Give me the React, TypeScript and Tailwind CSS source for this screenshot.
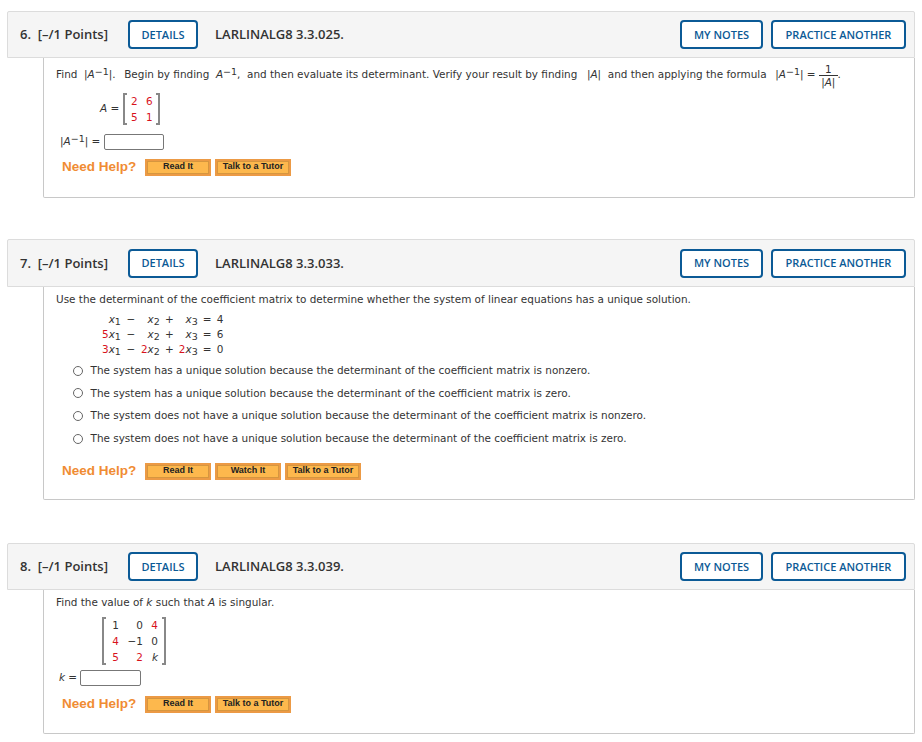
import type { ReactNode } from "react";

const bodyFont = "font-['DejaVu_Sans',sans-serif] text-[10.45px] text-[#333]";

function OutlineButton({ label, className }: { label: string; className: string }) {
  return (
    <div
      className={`flex h-[29px] items-center justify-center rounded-[4px] border-2 border-[#0b5a96] bg-white pt-[1px] font-['Open_Sans',sans-serif] text-[11px] font-semibold text-[#0b5a96] ${className}`}
    >
      {label}
    </div>
  );
}

function Header({ num, code, height }: { num: number; code: string; height: string }) {
  return (
    <div
      className={`flex items-center rounded-t-[2px] border border-[#dcdcdc] bg-[#f5f5f5] pl-[12px] pr-[8px] font-['Open_Sans',sans-serif] text-[#333] ${height}`}
    >
      <span className="w-[108px] whitespace-nowrap pt-[1px] text-[13px] font-semibold">
        {num}.&nbsp; [–/1 Points]
      </span>
      <OutlineButton label="DETAILS" className="w-[70px]" />
      <span className="ml-[17px] pt-[1px] text-[13px] font-semibold">{code}</span>
      <div className="ml-auto flex gap-[8px]">
        <OutlineButton label="MY NOTES" className="w-[83px]" />
        <OutlineButton label="PRACTICE ANOTHER" className="w-[135px]" />
      </div>
    </div>
  );
}

function HelpButton({ label, className }: { label: string; className: string }) {
  return (
    <div
      className={`flex h-[17px] items-center justify-center border-2 border-[#ec9a45] bg-[#fdb84d] font-['Liberation_Sans',sans-serif] text-[9px] font-bold text-[#222] shadow-[inset_0_0_0_1px_#d6963f] ${className}`}
    >
      {label}
    </div>
  );
}

function NeedHelp({ watch, className }: { watch?: boolean; className: string }) {
  return (
    <div className={`flex items-center ${className}`}>
      <span className="w-[83px] font-['Liberation_Sans',sans-serif] text-[13.5px] font-bold text-[#f08c33]">
        Need Help?
      </span>
      <div className="flex gap-[4px]">
        <HelpButton label="Read It" className="w-[66px]" />
        {watch && <HelpButton label="Watch It" className="w-[66px]" />}
        <HelpButton label="Talk to a Tutor" className="w-[76px]" />
      </div>
    </div>
  );
}

function Inv() {
  return (
    <span className="whitespace-nowrap">
      <i>A</i>
      <sup className="top-[-3px] align-baseline text-[9.5px] leading-none">−1</sup>
    </span>
  );
}

const Red = ({ children }: { children: ReactNode }) => <span className="text-[#d8121c]">{children}</span>;

function Matrix({ rows, cols }: { rows: ReactNode[][]; cols: string }) {
  return (
    <div className="relative px-[5px]">
      <div className="absolute inset-y-0 left-0 w-[4px] border-y-2 border-l-2 border-[#888]" />
      <div className="absolute inset-y-0 right-0 w-[4px] border-y-2 border-r-2 border-[#888]" />
      <div className={`grid justify-items-end leading-[16px] ${cols}`}>
        {rows.flat().map((cell, i) => (
          <span key={i}>{cell}</span>
        ))}
      </div>
    </div>
  );
}

const X = ({ n }: { n: number }) => (
  <span className="whitespace-nowrap">
    <i>x</i>
    <sub className="bottom-[-2px] align-baseline text-[9.5px] leading-none">{n}</sub>
  </span>
);

function AnswerBox({ className }: { className: string }) {
  return <div className={`h-[16px] rounded-[2px] border border-[#777] bg-white ${className}`} />;
}

const options = [
  "The system has a unique solution because the determinant of the coefficient matrix is nonzero.",
  "The system has a unique solution because the determinant of the coefficient matrix is zero.",
  "The system does not have a unique solution because the determinant of the coefficient matrix is nonzero.",
  "The system does not have a unique solution because the determinant of the coefficient matrix is zero.",
];

const system: ReactNode[][] = [
  ["", <X n={1} />, "−", "", <X n={2} />, "+", "", <X n={3} />, "=", "4"],
  [<Red>5</Red>, <X n={1} />, "−", "", <X n={2} />, "+", "", <X n={3} />, "=", "6"],
  [<Red>3</Red>, <X n={1} />, "−", <Red>2</Red>, <X n={2} />, "+", <Red>2</Red>, <X n={3} />, "=", "0"],
];

export default function App() {
  return (
    <div className={`min-h-[742px] w-[922px] overflow-hidden bg-white pl-[7px] pt-[11px] ${bodyFont}`}>
      {/* Question 6 */}
      <section className="w-[908px]">
        <Header num={6} code="LARLINALG8 3.3.025." height="h-[47px]" />
        <div className="ml-[36px] h-[140px] rounded-b-[2px] border-x border-b border-[#c8c8c8] pl-[12px] pt-[6px]">
          <p className="flex h-[20px] items-center whitespace-pre leading-[20px]">
            Find  |<Inv />|.  <span className="ml-[2px]">Begin by finding  </span><Inv />,  and then evaluate its determinant. Verify your result by finding  <span className="ml-[3px]">|<i>A</i>|</span>  and then applying the formula  <span className="ml-[2px]">|<Inv />|</span> ={" "}
            <span className="inline-flex translate-y-[2px] flex-col items-center leading-[11px]">
              <span className="border-b border-[#333] px-[6px]">1</span>
              <span className="pt-[1px]">
                |<i>A</i>|
              </span>
            </span>
            .
          </p>
          <div className="mt-[9px] flex items-center pl-[44px]">
            <i>A</i>&nbsp;=&nbsp;
            <Matrix
              cols="grid-cols-[10px_15px] pr-[2px]"
              rows={[
                [<Red>2</Red>, <Red>6</Red>],
                [<Red>5</Red>, <Red>1</Red>],
              ]}
            />
          </div>
          <div className="mt-[9px] flex items-center pl-[4px]">
            <span className="whitespace-pre">
              |<Inv />| =
            </span>
            <AnswerBox className="ml-[4px] w-[60px]" />
          </div>
          <NeedHelp className="mt-[7px] pl-[6px]" />
        </div>
      </section>

      {/* Question 7 */}
      <section className="mt-[41px] w-[908px]">
        <Header num={7} code="LARLINALG8 3.3.033." height="h-[48px]" />
        <div className="ml-[36px] h-[213px] rounded-b-[2px] border-x border-b border-[#c8c8c8] pl-[12px] pt-[3px]">
          <p className="leading-[18px]">
            Use the determinant of the coefficient matrix to determine whether the system of linear equations has a unique solution.
          </p>
          <div className="ml-[46px] mt-[4px] grid grid-cols-[auto_auto_20px_auto_auto_19px_auto_auto_19px_auto] justify-start leading-[15px]">
            {system.flat().map((cell, i) => (
              <span key={i} className={i % 10 === 2 || i % 10 === 5 || i % 10 === 8 ? "text-center" : "text-right"}>
                {cell}
              </span>
            ))}
          </div>
          <div className="ml-[17px] mt-[2.5px] flex flex-col">
            {options.map((text) => (
              <label key={text} className="flex h-[22.6px] items-center">
                <span className="mr-[7.5px] size-[10px] rounded-full border border-[#666] bg-white" />
                {text}
              </label>
            ))}
          </div>
          <NeedHelp watch className="mt-[11px] pl-[6px]" />
        </div>
      </section>

      {/* Question 8 */}
      <section className="mt-[43px] w-[908px]">
        <Header num={8} code="LARLINALG8 3.3.039." height="h-[47px]" />
        <div className="ml-[36px] h-[144px] rounded-b-[2px] border-x border-b border-[#c8c8c8] pl-[12px] pt-[3px]">
          <p className="leading-[18px]">
            Find the value of <i>k</i> such that <i>A</i> is singular.
          </p>
          <div className="ml-[46px] mt-[6px] flex">
            <Matrix
              cols="grid-cols-[12px_24px_15px] pr-[3px]"
              rows={[
                ["1", "0", <Red>4</Red>],
                [<Red>4</Red>, "−1", "0"],
                [<Red>5</Red>, <Red>2</Red>, <i>k</i>],
              ]}
            />
          </div>
          <div className="mt-[5px] flex items-center pl-[3px]">
            <span className="whitespace-pre">
              <i>k</i> =
            </span>
            <AnswerBox className="ml-[3px] w-[61px]" />
          </div>
          <NeedHelp className="mt-[8px] pl-[6px]" />
        </div>
      </section>
    </div>
  );
}
